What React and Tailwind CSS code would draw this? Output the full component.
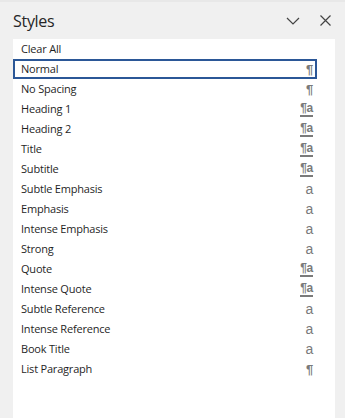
import React from "react";

const items = [
  ["Clear All", null],
  ["Normal", "p"],
  ["No Spacing", "p"],
  ["Heading 1", "pa"],
  ["Heading 2", "pa"],
  ["Title", "pa"],
  ["Subtitle", "pa"],
  ["Subtle Emphasis", "a"],
  ["Emphasis", "a"],
  ["Intense Emphasis", "a"],
  ["Strong", "a"],
  ["Quote", "pa"],
  ["Intense Quote", "pa"],
  ["Subtle Reference", "a"],
  ["Intense Reference", "a"],
  ["Book Title", "a"],
  ["List Paragraph", "p"],
];

function Icon({ kind }) {
  if (!kind) return null;
  if (kind === "p")
    return <span className="font-['Liberation_Sans',sans-serif] text-[13px] font-bold text-[#7a7a7a] leading-none">¶</span>;
  if (kind === "a")
    return <span className="font-['Liberation_Sans',sans-serif] text-[14px] text-[#7a7a7a] leading-none">a</span>;
  return (
    <span className="font-['Liberation_Sans',sans-serif] text-[12px] font-bold text-[#7a7a7a] leading-none border-b-2 border-[#7a7a7a] pb-[1px] tracking-[-0.3px]">
      ¶a
    </span>
  );
}

export default function App() {
  return (
    <div
      className="w-[345px] h-[418px] bg-[#f0f0f0] flex flex-col overflow-hidden border-t-2 border-[#e8e8e8]"
      style={{ fontFamily: '"Open Sans", "Noto Sans", sans-serif' }}
    >
      <div className="h-[37px] flex items-center pl-[13px] pr-[14px]">
        <span className="text-[16px] tracking-[-0.3px] text-[#262626] leading-none">Styles</span>
        <div className="ml-auto flex items-center gap-[20px]">
          <svg width="14" height="8" viewBox="0 0 14 8" fill="none">
            <path d="M1 1 L7 7 L13 1" stroke="#444" strokeWidth="1.2" />
          </svg>
          <svg width="11" height="11" viewBox="0 0 11 11" fill="none">
            <path d="M0.5 0.5 L10.5 10.5 M10.5 0.5 L0.5 10.5" stroke="#444" strokeWidth="1.2" />
          </svg>
        </div>
      </div>
      <div className="ml-[13px] w-[322px] flex-1 bg-white pr-[18px]">
        {items.map(([name, kind]) =>
          name === "Normal" ? (
            <div
              key={name}
              className="h-[20px] flex items-center border-2 border-[#2b5797] pl-[6px] pr-[2px] text-[11px] tracking-[-0.2px] text-[#1f1f1f]"
            >
              <span>{name}</span>
              <span className="ml-auto flex items-center">
                <Icon kind={kind} />
              </span>
            </div>
          ) : (
            <div
              key={name}
              className="h-[20px] flex items-center pl-[8px] pr-[4px] text-[11px] tracking-[-0.2px] text-[#1f1f1f]"
            >
              <span>{name}</span>
              <span className="ml-auto flex items-center">
                <Icon kind={kind} />
              </span>
            </div>
          )
        )}
      </div>
    </div>
  );
}
